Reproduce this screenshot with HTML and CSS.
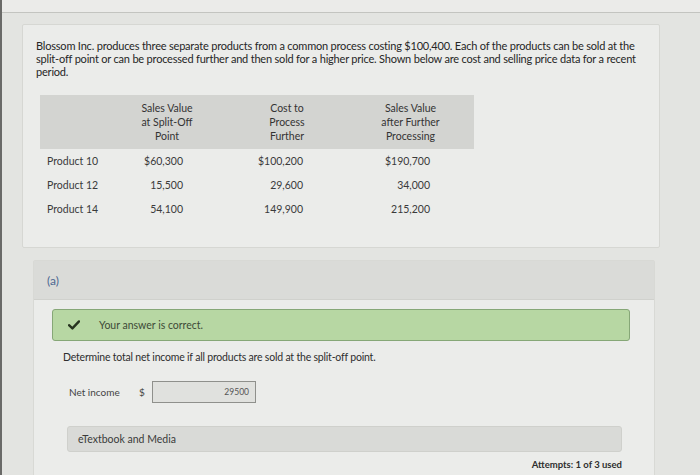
FILE: index.html
```html
<!DOCTYPE html>
<html>
<head>
<meta charset="utf-8">
<link rel="stylesheet" href="styles.css">
</head>
<body>
<div class="screen">
  <div class="topbar"></div>
  <div class="content">
    <div class="card intro">
      <p class="question">Blossom Inc. produces three separate products from a common process costing $100,400. Each of the products can be sold at the split-off point or can be processed further and then sold for a higher price. Shown below are cost and selling price data for a recent period.</p>
      <table class="data">
        <thead>
          <tr>
            <th class="c-label"></th>
            <th>Sales Value<br>at Split-Off<br>Point</th>
            <th>Cost to<br>Process<br>Further</th>
            <th>Sales Value<br>after Further<br>Processing</th>
          </tr>
        </thead>
        <tbody>
          <tr><td class="c-label">Product 10</td><td>$60,300</td><td>$100,200</td><td>$190,700</td></tr>
          <tr><td class="c-label">Product 12</td><td>15,500</td><td>29,600</td><td>34,000</td></tr>
          <tr><td class="c-label">Product 14</td><td>54,100</td><td>149,900</td><td>215,200</td></tr>
        </tbody>
      </table>
    </div>

    <div class="card part">
      <div class="part-head">(a)</div>
      <div class="part-body">
        <div class="correct">
          <svg class="check" width="12" height="10" viewBox="0 0 12 10"><path d="M1 5.2 L4.4 8.4 L11 1.4" fill="none" stroke="#27341f" stroke-width="2.4" stroke-linecap="round" stroke-linejoin="round"/></svg>
          <span>Your answer is correct.</span>
        </div>
        <p class="prompt">Determine total net income if all products are sold at the split-off point.</p>
        <div class="answer-row">
          <span class="answer-label">Net income</span>
          <span class="dollar">$</span>
          <span class="answer-box">29500</span>
        </div>
        <div class="media">eTextbook and Media</div>
        <div class="attempts">Attempts: 1 of 3 used</div>
      </div>
    </div>
  </div>
</div>
</body>
</html>
```

FILE: styles.css
```css
html, body {
  margin: 0;
  padding: 0;
}
body {
  width: 700px;
  height: 475px;
  overflow: hidden;
  background: #e3e4e1;
  font-family: Lato, "Open Sans", sans-serif;
  color: #2e2e2e;
}
.screen {
  height: 475px;
  border-left: 2px solid #6a6a68;
  box-sizing: border-box;
}
.topbar {
  height: 12px;
  background: #ebebe9;
  border-bottom: 1px solid #c3c4c0;
}
.content {
  padding: 11px 40px 0 20px;
}
.card {
  background: #ebecea;
  border: 1px solid #d6d7d3;
  border-radius: 2px;
}
.intro {
  padding: 14px 8px 26px 13px;
}
.question {
  margin: 0;
  font-size: 11px;
  line-height: 13px;
  letter-spacing: -0.2px;
  color: #262626;
}
.data {
  margin: 17px 0 0 4px;
  border-collapse: collapse;
  font-size: 10.5px;
  color: #3a3a3a;
}
.data thead tr {
  background: #d3d4d1;
}
.data th {
  font-weight: normal;
  line-height: 14px;
  padding: 6px 0 6px;
  width: 120px;
  text-align: center;
  color: #333;
}
.data th:last-child {
  width: 127px;
}
.data th.c-label {
  width: 67px;
}
.data td {
  height: 24px;
  padding: 0 44px 0 0;
  text-align: right;
}
.data td.c-label {
  text-align: left;
  padding: 0 0 0 7px;
}
.part {
  margin: 12px 5px 0 11px;
  height: 234px;
  border-color: #d8d9d5;
}
.part-head {
  height: 38px;
  background: #dadbd8;
  display: flex;
  align-items: center;
  padding-left: 13px;
  font-size: 12px;
  color: #4c6791;
  border-bottom: 1px solid #d0d1cd;
}
.part-body {
  display: flex;
  flex-direction: column;
  padding: 9px 24px 0 18px;
}
.correct {
  height: 30px;
  background: #b7d7a3;
  border: 1px solid #86a777;
  border-radius: 3px;
  display: flex;
  align-items: center;
  padding-left: 15px;
  font-size: 10.5px;
  color: #3d4a37;
}
.check {
  margin-right: 19px;
}
.prompt {
  margin: 10px 0 0 11px;
  font-size: 10.5px;
  line-height: 13px;
  letter-spacing: -0.2px;
  color: #2e2e2e;
}
.answer-row {
  display: flex;
  align-items: center;
  margin: 17px 0 0 17px;
  font-size: 10px;
  color: #444;
}
.answer-label {
  width: 70px;
}
.dollar {
  width: 13px;
}
.answer-box {
  width: 96px;
  height: 20px;
  border: 1px solid #8f908c;
  background: #e0e1de;
  display: flex;
  align-items: center;
  justify-content: flex-end;
  padding-right: 6px;
  font-size: 8.5px;
  color: #555;
}
.media {
  margin: 23px 8px 0 15px;
  height: 24px;
  background: #d9dad7;
  border: 1px solid #cfd0cc;
  border-radius: 3px;
  display: flex;
  align-items: center;
  padding-left: 10px;
  font-size: 10.5px;
  color: #3a3a3a;
}
.attempts {
  align-self: flex-end;
  margin: 7px 8px 0 0;
  font-size: 9.5px;
  font-weight: bold;
  color: #2e2e2e;
}
```
